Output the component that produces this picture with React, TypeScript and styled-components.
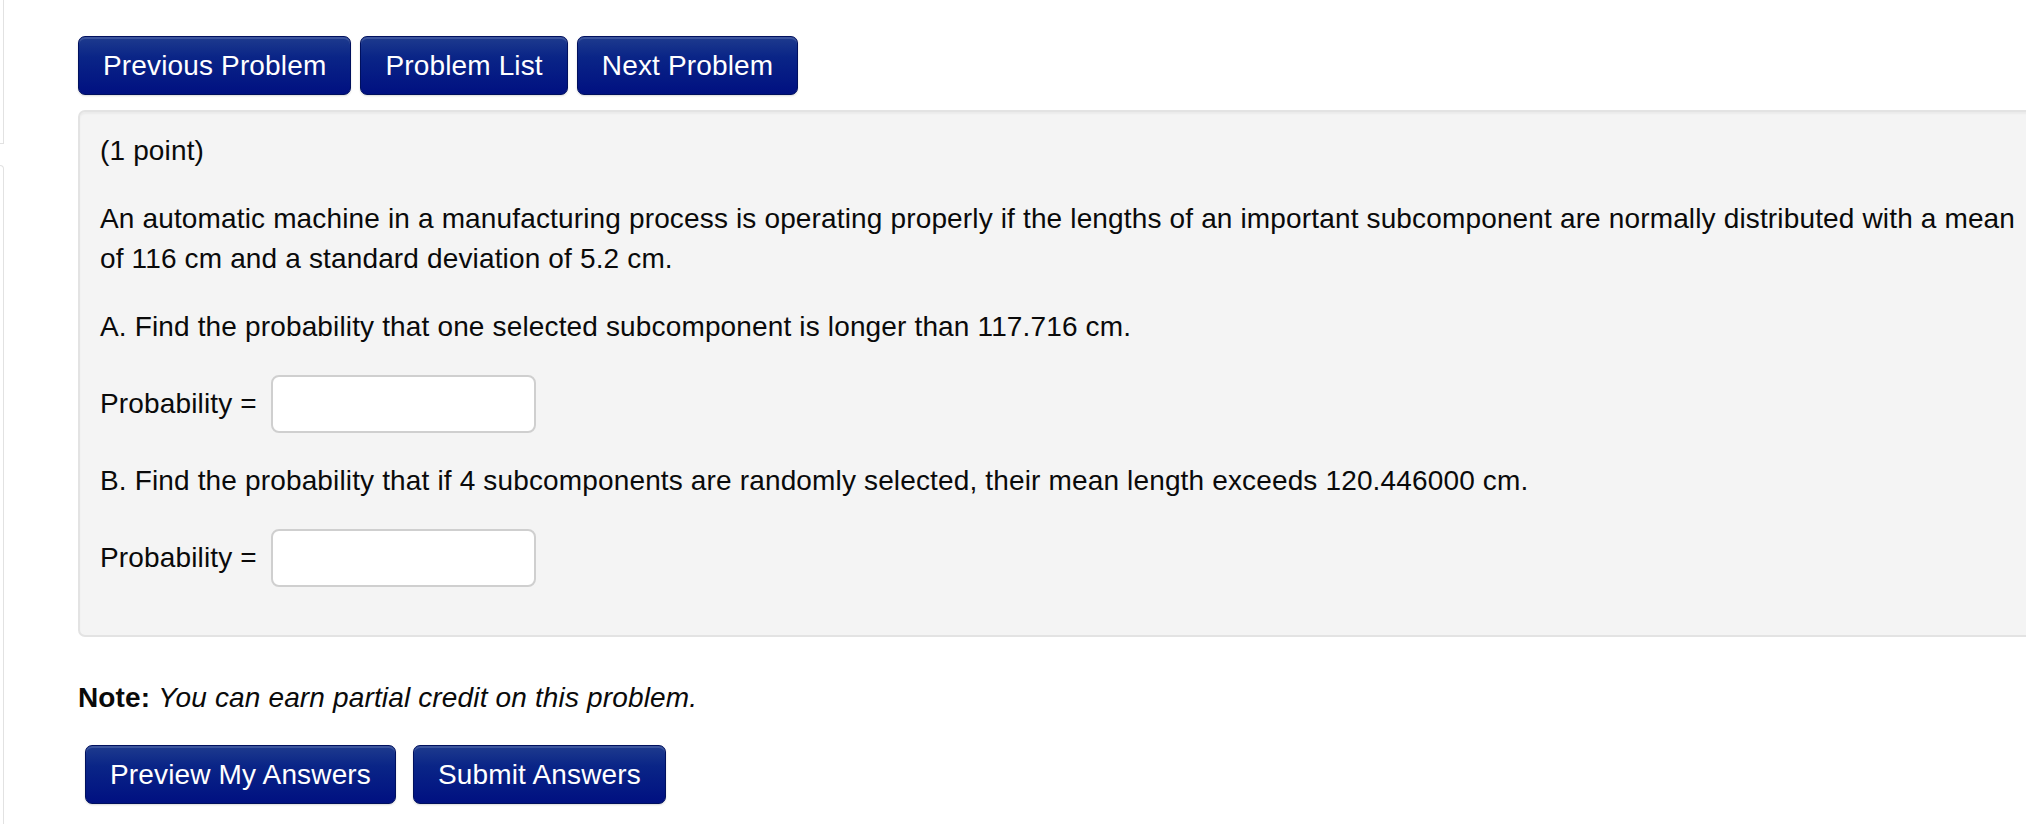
import React from 'react'
import styled, { createGlobalStyle } from 'styled-components'

// G L O B A L
const GlobalStyle = createGlobalStyle`
  html, body {
    margin: 0;
    padding: 0;
    background: #ffffff;
    overflow: hidden;
  }

  body {
    font-family: "Liberation Sans", Arial, Helvetica, sans-serif;
    font-size: 28px;
    line-height: 40px;
    letter-spacing: 0.15px;
    color: #0a0a0a;
  }
`

// S T Y L E S
const Page = styled.div`
  display: flex;
  align-items: flex-start;
  width: 2026px;
  height: 824px;
`

const Sidebar = styled.aside`
  display: flex;
  flex-direction: column;
  flex: 0 0 4px;
  gap: 21px;
`

const SideBox = styled.div<{ top?: boolean }>`
  height: ${(props): string => { return props.top ? '144px' : '700px' }};
  border-right: 1px solid #e2e2e2;
  border-bottom: ${(props): string => { return props.top ? '1px solid #e2e2e2' : 'none' }};
  border-top: ${(props): string => { return props.top ? 'none' : '1px solid #e2e2e2' }};
  border-top-right-radius: ${(props): string => { return props.top ? '0' : '8px' }};
  box-sizing: border-box;
`

const Main = styled.main`
  flex: 1 1 auto;
  padding: 36px 0 0 74px;
  min-width: 0;
`

const ButtonRow = styled.div<{ inset?: boolean }>`
  display: flex;
  gap: ${(props): string => { return props.inset ? '17px' : '9px' }};
  padding-left: ${(props): string => { return props.inset ? '7px' : '0' }};
`

const NavButton = styled.button`
  box-sizing: border-box;
  height: 59px;
  padding: 0 24px;
  border: 1px solid #00105e;
  border-radius: 7px;
  background: linear-gradient(to bottom, #1e3b8e 0%, #0a2587 35%, #001081 100%);
  box-shadow: inset 0 2px 0 rgba(255, 255, 255, 0.14), 0 1px 2px rgba(0, 0, 0, 0.15);
  color: #ffffff;
  font-family: "Liberation Sans", Arial, Helvetica, sans-serif;
  font-size: 28px;
  line-height: 40px;
  letter-spacing: 0.15px;
  cursor: pointer;
  white-space: nowrap;
`

const Panel = styled.section`
  box-sizing: border-box;
  width: 1975px;
  margin-top: 15px;
  padding: 19px 20px 20px 20px;
  background: #f4f4f4;
  border: 2px solid #e3e3e3;
  border-radius: 7px;
  box-shadow: inset 0 2px 2px rgba(0, 0, 0, 0.04);
`

const Para = styled.p`
  margin: 0 0 28px 0;
`

const AnswerRow = styled.div`
  display: flex;
  align-items: center;
  gap: 14px;
  margin: 0 0 28px 0;
`

const AnswerInput = styled.input`
  box-sizing: border-box;
  width: 265px;
  height: 58px;
  margin: 0;
  border: 2px solid #cfcfcf;
  border-radius: 8px;
  background: #ffffff;
  font-family: "Liberation Sans", Arial, Helvetica, sans-serif;
  font-size: 28px;
  outline: none;
`

const Note = styled.p`
  margin: 41px 0 27px 0;

  strong {
    font-weight: 700;
  }

  em {
    font-style: italic;
  }
`

// C O M P O N E N T
export default function App() {
  return (
    <>
      <GlobalStyle />
      <Page>
        <Sidebar>
          <SideBox top />
          <SideBox />
        </Sidebar>
        <Main>
          <ButtonRow>
            <NavButton>Previous Problem</NavButton>
            <NavButton>Problem List</NavButton>
            <NavButton>Next Problem</NavButton>
          </ButtonRow>

          <Panel>
            <Para>(1 point)</Para>
            <Para>
              An automatic machine in a manufacturing process is operating properly if the lengths of an important subcomponent are normally distributed with a mean of 116 cm and a standard deviation of 5.2 cm.
            </Para>
            <Para>A. Find the probability that one selected subcomponent is longer than 117.716 cm.</Para>
            <AnswerRow>
              <span>Probability =</span>
              <AnswerInput type='text' />
            </AnswerRow>
            <Para>B. Find the probability that if 4 subcomponents are randomly selected, their mean length exceeds 120.446000 cm.</Para>
            <AnswerRow>
              <span>Probability =</span>
              <AnswerInput type='text' />
            </AnswerRow>
          </Panel>

          <Note>
            <strong>Note:</strong> <em>You can earn partial credit on this problem.</em>
          </Note>

          <ButtonRow inset>
            <NavButton>Preview My Answers</NavButton>
            <NavButton>Submit Answers</NavButton>
          </ButtonRow>
        </Main>
      </Page>
    </>
  )
}
